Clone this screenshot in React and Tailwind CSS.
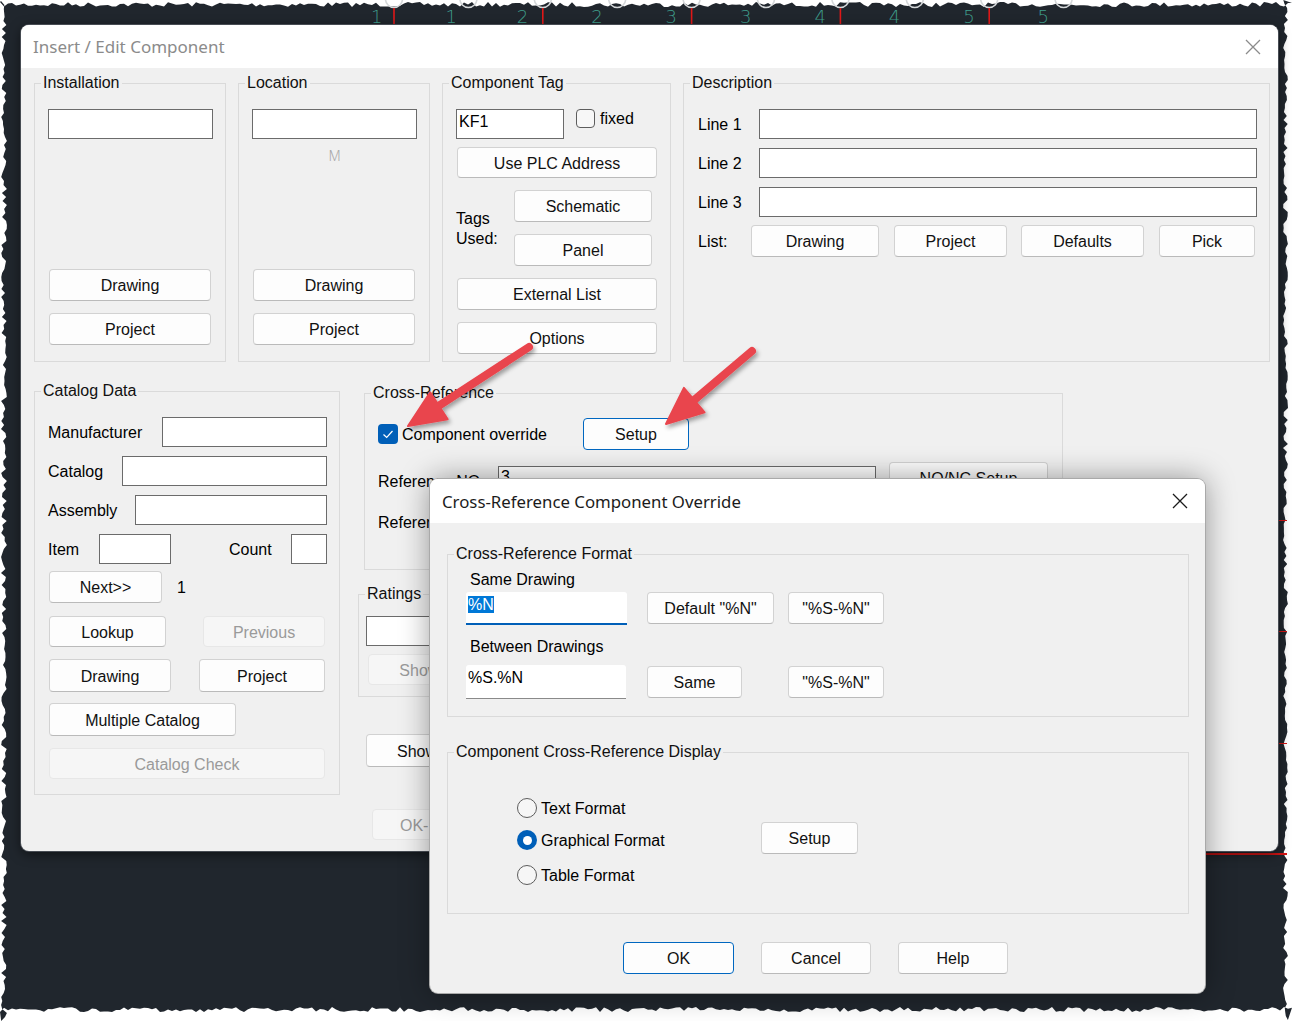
import React from "react";

const FB = "font-['Liberation_Sans',Arial,sans-serif]";
const FT = "font-['Noto_Sans','Open_Sans',sans-serif]";

function makeTorn() {
  let s = 7;
  const r = () => {
    s = (s * 16807) % 2147483647;
    return s / 2147483647;
  };
  const W = 1292;
  const H = 1021;
  const pts = [];
  for (let x = 0; x <= W; x += 4) pts.push(`${x}px ${(2 + r() * 5).toFixed(1)}px`);
  for (let y = 0; y <= H; y += 4) pts.push(`${(W - 4 - r() * 5).toFixed(1)}px ${y}px`);
  for (let x = W; x >= 0; x -= 4) pts.push(`${x}px ${(H - 9 - r() * 5).toFixed(1)}px`);
  for (let y = H; y >= 0; y -= 4) pts.push(`${(1 + r() * 6).toFixed(1)}px ${y}px`);
  return `polygon(${pts.join(",")})`;
}

function Btn({ children, className = "", disabled = false, focused = false }) {
  const tone = disabled
    ? "border-[#e7e7e7] bg-[#f6f6f6] text-[#9a9a9a]"
    : focused
    ? "border-[#0067c0] bg-[#fdfdfd] text-[#111111]"
    : "border-[#d2d2d2] border-b-[#bababa] bg-[#fdfdfd] text-[#111111]";
  return (
    <div
      className={`flex shrink-0 items-center justify-center overflow-hidden whitespace-nowrap rounded-[4px] border pt-[2px] text-[16px] leading-[18px] ${tone} ${className}`}
    >
      {children}
    </div>
  );
}

function Field({ className = "", children }) {
  return (
    <div
      className={`shrink-0 overflow-hidden whitespace-nowrap border border-[#6b6b6b] bg-white text-[16px] leading-[18px] text-black ${className}`}
    >
      {children}
    </div>
  );
}

function Group({ label, className = "", inner = "", children }) {
  return (
    <fieldset className={`m-0 min-w-0 shrink-0 border border-[#dadada] p-0 ${className}`}>
      <legend className="ml-[6px] px-[2px] text-[16px] leading-[18px] text-[#111111]">{label}</legend>
      <div className={inner}>{children}</div>
    </fieldset>
  );
}

function XIcon({ color }) {
  return (
    <svg width="16" height="16" viewBox="0 0 16 16">
      <path d="M1 1 L15 15 M15 1 L1 15" stroke={color} strokeWidth="1.3" fill="none" />
    </svg>
  );
}

function CheckOn() {
  return (
    <div className="flex h-[20px] w-[20px] shrink-0 items-center justify-center rounded-[4px] bg-[#005fb8]">
      <svg width="20" height="20" viewBox="0 0 20 20">
        <path d="M5.5 10.5 L8.7 13.5 L14.5 7" stroke="#ffffff" strokeWidth="1.2" fill="none" />
      </svg>
    </div>
  );
}

function Radio({ checked }) {
  if (checked)
    return (
      <div className="flex h-[20px] w-[20px] shrink-0 items-center justify-center rounded-full bg-[#005fb8]">
        <div className="h-[9px] w-[9px] rounded-full bg-white" />
      </div>
    );
  return <div className="h-[20px] w-[20px] shrink-0 rounded-full border border-[#5c5c5c] bg-[#f6f6f6]" />;
}

function Ruler() {
  const nums = [1, 1, 2, 2, 3, 3, 4, 4, 5, 5];
  return (
    <svg className="absolute left-0 top-0" width="1292" height="26">
      {nums.map((n, i) => {
        const c = 394 + 74.4 * i;
        return (
          <g key={i}>
            <circle cx={c} cy={-1} r={8.5} fill="none" stroke="#d5d8da" strokeWidth="1.6" />
            {i % 2 === 0 && <line x1={c} y1={8} x2={c} y2={26} stroke="#e01818" strokeWidth="1.6" />}
            <text x={c - (n === 1 ? 23 : 26)} y={23} fontSize="18" fill="#3f9e8c" fontFamily="DejaVu Sans, sans-serif" fontWeight="300">
              {n}
            </text>
          </g>
        );
      })}
    </svg>
  );
}

function Arrow({ tail, tip }) {
  const dx = tip[0] - tail[0];
  const dy = tip[1] - tail[1];
  const L = Math.hypot(dx, dy);
  const ux = dx / L;
  const uy = dy / L;
  const nx = -uy;
  const ny = ux;
  const hl = 37;
  const hw = 16;
  const bx = tip[0] - ux * hl;
  const by = tip[1] - uy * hl;
  const p = [
    [tip[0], tip[1]],
    [bx + nx * hw, by + ny * hw],
    [bx - nx * hw, by - ny * hw],
  ]
    .map((q) => q.map((v) => v.toFixed(1)).join(","))
    .join(" ");
  return (
    <g filter="url(#ash)">
      <line x1={tail[0]} y1={tail[1]} x2={bx + ux * 4} y2={by + uy * 4} stroke="#e9454d" strokeWidth="8" strokeLinecap="round" />
      <polygon points={p} fill="#e9454d" stroke="#e9454d" strokeWidth="2" strokeLinejoin="round" />
    </g>
  );
}

function Arrows() {
  return (
    <svg className="pointer-events-none absolute left-0 top-0" width="1292" height="1021">
      <defs>
        <filter id="ash" x="-20%" y="-20%" width="140%" height="140%">
          <feDropShadow dx="2" dy="3" stdDeviation="2" floodColor="#000000" floodOpacity="0.35" />
        </filter>
      </defs>
      <Arrow tail={[529, 347]} tip={[408, 426]} />
      <Arrow tail={[752, 351]} tip={[666, 424]} />
    </svg>
  );
}

function MainDialog() {
  return (
    <div className="absolute left-[21px] top-[25px] flex h-[826px] w-[1257px] flex-col overflow-hidden rounded-[8px] bg-[#f0f0f0] text-black shadow-[0_3px_12px_rgba(0,0,0,0.55)] ring-1 ring-[#474c53]">
      <div className="flex h-[43px] shrink-0 items-center justify-between bg-white pl-[12px] pr-[17px]">
        <span className={`${FT} text-[17px] text-[#8b8b8b]`}>Insert / Edit Component</span>
        <XIcon color="#8b8b8b" />
      </div>
      <div className="flex flex-col pl-[13px] pt-[6px] text-[16px] leading-[18px]">
        <div className="flex gap-[12px]">
          <Group label="Installation" className="w-[192px]" inner="flex h-[269px] flex-col justify-between pl-[13px] pt-[17px] pb-[16px]">
            <Field className="h-[30px] w-[165px]" />
            <div className="ml-[1px] flex flex-col gap-[12px]">
              <Btn className="h-[32px] w-[162px]">Drawing</Btn>
              <Btn className="h-[32px] w-[162px]">Project</Btn>
            </div>
          </Group>
          <Group label="Location" className="w-[192px]" inner="flex h-[269px] flex-col justify-between pl-[13px] pt-[17px] pb-[16px]">
            <div className="flex flex-col">
              <Field className="h-[30px] w-[165px]" />
              <div className={`${FT} mt-[9px] w-[165px] text-center text-[14px] font-light leading-[16px] text-[#a8a8a8]`}>M</div>
            </div>
            <div className="ml-[1px] flex flex-col gap-[12px]">
              <Btn className="h-[32px] w-[162px]">Drawing</Btn>
              <Btn className="h-[32px] w-[162px]">Project</Btn>
            </div>
          </Group>
          <Group label="Component Tag" className="w-[229px]" inner="flex h-[269px] flex-col pl-[13px] pt-[17px]">
            <div className="flex items-start">
              <Field className="h-[30px] w-[108px] pl-[2px] pt-[3px]">KF1</Field>
              <div className="ml-[12px] -mt-[1px] flex items-center">
                <div className="h-[19px] w-[19px] rounded-[4px] border border-[#5d5d5d] bg-[#f7f7f7]" />
                <span className="ml-[5px] pt-[2px]">fixed</span>
              </div>
            </div>
            <Btn className="ml-[1px] mt-[8px] h-[31px] w-[200px]">Use PLC Address</Btn>
            <div className="mt-[12px] flex items-center">
              <div className="w-[58px] pt-[2px] leading-[20px]">
                Tags
                <br />
                Used:
              </div>
              <div className="flex flex-col gap-[12px]">
                <Btn className="h-[32px] w-[138px]">Schematic</Btn>
                <Btn className="h-[32px] w-[138px]">Panel</Btn>
              </div>
            </div>
            <Btn className="ml-[1px] mt-[12px] h-[32px] w-[200px]">External List</Btn>
            <Btn className="ml-[1px] mt-[12px] h-[32px] w-[200px]">Options</Btn>
          </Group>
          <Group label="Description" className="w-[587px]" inner="flex h-[269px] flex-col gap-[9px] pl-[14px] pt-[17px]">
            {["Line 1", "Line 2", "Line 3"].map((l) => (
              <div key={l} className="flex items-center">
                <span className="w-[61px] pt-[2px]">{l}</span>
                <Field className="h-[30px] w-[498px]" />
              </div>
            ))}
            <div className="-mt-[1px] flex items-center">
              <span className="w-[53px] pt-[2px]">List:</span>
              <Btn className="h-[32px] w-[128px]">Drawing</Btn>
              <Btn className="ml-[15px] h-[32px] w-[113px]">Project</Btn>
              <Btn className="ml-[14px] h-[32px] w-[123px]">Defaults</Btn>
              <Btn className="ml-[15px] h-[32px] w-[96px]">Pick</Btn>
            </div>
          </Group>
        </div>

        <div className="mt-[20px] flex items-start">
          <Group label="Catalog Data" className="w-[306px]" inner="flex h-[394px] flex-col pl-[13px] pr-[12px] pt-[17px]">
            <div className="flex items-center justify-between">
              <span className="pt-[2px]">Manufacturer</span>
              <Field className="h-[30px] w-[165px]" />
            </div>
            <div className="mt-[9px] flex items-center justify-between">
              <span className="pt-[2px]">Catalog</span>
              <Field className="h-[30px] w-[205px]" />
            </div>
            <div className="mt-[9px] flex items-center justify-between">
              <span className="pt-[2px]">Assembly</span>
              <Field className="h-[30px] w-[192px]" />
            </div>
            <div className="mt-[9px] flex items-center">
              <span className="w-[51px] pt-[2px]">Item</span>
              <Field className="h-[30px] w-[72px]" />
              <span className="ml-[58px] w-[62px] pt-[2px]">Count</span>
              <Field className="h-[30px] w-[36px]" />
            </div>
            <div className="mt-[7px] flex items-center">
              <Btn className="ml-[1px] h-[32px] w-[113px]">Next&gt;&gt;</Btn>
              <span className="ml-[15px] pt-[2px]">1</span>
            </div>
            <div className="mt-[13px] flex items-center">
              <Btn className="ml-[1px] h-[31px] w-[117px]">Lookup</Btn>
              <Btn disabled className="ml-[37px] h-[31px] w-[122px]">
                Previous
              </Btn>
            </div>
            <div className="mt-[12px] flex items-center">
              <Btn className="ml-[1px] h-[33px] w-[122px]">Drawing</Btn>
              <Btn className="ml-[28px] h-[33px] w-[126px]">Project</Btn>
            </div>
            <Btn className="ml-[1px] mt-[11px] h-[33px] w-[187px]">Multiple Catalog</Btn>
            <Btn disabled className="ml-[1px] mt-[12px] h-[31px] w-[276px]">
              Catalog Check
            </Btn>
          </Group>

          <div className="ml-[18px] mt-[2px] flex flex-col items-start">
            <Group label="Cross-Reference" className="ml-[6px] w-[699px]" inner="h-[167px] pl-[13px] pt-[16px]">
              <div className="flex items-center">
                <div className="flex w-[205px] items-center">
                  <CheckOn />
                  <span className="ml-[4px] pt-[2px]">Component override</span>
                </div>
                <Btn focused className="h-[32px] w-[106px]">
                  Setup
                </Btn>
              </div>
              <div className="mt-[12px] flex items-start">
                <span className="mt-[11px] w-[120px]">Reference NO</span>
                <Field className="mt-[4px] h-[30px] w-[378px] pl-[2px] pt-[1px]">3</Field>
                <Btn className="ml-[13px] h-[32px] w-[159px]">NO/NC Setup</Btn>
              </div>
              <div className="mt-[18px]">Reference Type</div>
            </Group>
            <Group label="Ratings" className="mt-[15px] w-[300px]" inner="flex h-[93px] flex-col items-start pl-[7px] pt-[13px]">
              <Field className="h-[30px] w-[250px]" />
              <Btn disabled className="ml-[2px] mt-[8px] h-[31px] w-[124px]">
                Show All
              </Btn>
            </Group>
            <Btn className="ml-[8px] mt-[37px] h-[33px] w-[102px]">Show</Btn>
            <Btn disabled className="ml-[14px] mt-[42px] h-[31px] w-[136px]">
              OK-Repeat
            </Btn>
          </div>
        </div>
      </div>
    </div>
  );
}

function RadioRow({ checked = false, label, className = "" }) {
  return (
    <div className={`flex h-[20px] items-center ${className}`}>
      <Radio checked={checked} />
      <span className="ml-[4px] pt-[2px]">{label}</span>
    </div>
  );
}

function OverrideDialog() {
  return (
    <div className="absolute left-[430px] top-[479px] flex h-[514px] w-[775px] flex-col overflow-hidden rounded-[8px] bg-[#f0f0f0] text-black shadow-[0_0_30px_rgba(0,0,0,0.4)] ring-1 ring-[#a9a9a9]">
      <div className="flex h-[44px] shrink-0 items-center justify-between bg-white pl-[12px] pr-[17px]">
        <span className={`${FT} pt-[2px] text-[16.8px] text-[#1b1b1b]`}>Cross-Reference Component Override</span>
        <XIcon color="#1b1b1b" />
      </div>
      <div className="flex flex-col pl-[17px] pt-[22px] text-[16px] leading-[18px]">
        <Group label="Cross-Reference Format" className="w-[742px]" inner="h-[153px] pl-[18px] pt-[7px]">
          <div className="ml-[4px] leading-[20px]">Same Drawing</div>
          <div className="mt-[2px] flex items-start">
            <div className="h-[33px] w-[161px] shrink-0 rounded-t-[3px] border-b-2 border-b-[#005fb8] bg-white pl-[2px] pt-[3px] leading-[19px]">
              <span className="bg-[#0078d7] text-white">%N</span>
            </div>
            <Btn className="ml-[20px] h-[32px] w-[127px]">Default "%N"</Btn>
            <Btn className="ml-[14px] h-[32px] w-[96px]">"%S-%N"</Btn>
          </div>
          <div className="ml-[4px] mt-[12px] leading-[20px]">Between Drawings</div>
          <div className="mt-[8px] flex items-start">
            <div className="h-[34px] w-[160px] shrink-0 rounded-t-[3px] border-b border-b-[#8a8a8a] bg-white pl-[2px] pt-[4px]">%S.%N</div>
            <Btn className="ml-[21px] mt-[1px] h-[32px] w-[95px]">Same</Btn>
            <Btn className="ml-[46px] mt-[1px] h-[32px] w-[96px]">"%S-%N"</Btn>
          </div>
        </Group>

        <Group label="Component Cross-Reference Display" className="mt-[26px] w-[742px]" inner="flex h-[152px] items-start">
          <div className="flex w-[313px] shrink-0 flex-col pl-[69px] pt-[37px]">
            <RadioRow label="Text Format" />
            <RadioRow checked label="Graphical Format" className="mt-[12px]" />
            <RadioRow label="Table Format" className="mt-[15px]" />
          </div>
          <Btn className="mt-[61px] h-[32px] w-[97px]">Setup</Btn>
        </Group>

        <div className="mt-[28px] flex">
          <Btn focused className="ml-[176px] h-[32px] w-[111px]">
            OK
          </Btn>
          <Btn className="ml-[27px] h-[32px] w-[110px]">Cancel</Btn>
          <Btn className="ml-[27px] h-[32px] w-[110px]">Help</Btn>
        </div>
      </div>
    </div>
  );
}

export default function App() {
  const torn = makeTorn();
  return (
    <div className={`relative h-[1021px] w-[1292px] overflow-hidden bg-white ${FB}`}>
      <div className="absolute inset-0 bg-[#20262d]" style={{ clipPath: torn }} />
      <Ruler />
      <div className="absolute left-[1279px] top-[520px] h-[1px] w-[8px] bg-[#d41414]" />
      <div className="absolute left-[1279px] top-[631px] h-[1px] w-[8px] bg-[#d41414]" />
      <div className="absolute left-[1279px] top-[743px] h-[1px] w-[8px] bg-[#d41414]" />
      <div className="absolute left-[1205px] top-[853px] h-[2px] w-[82px] bg-[#d41414]" />
      <MainDialog />
      <OverrideDialog />
      <Arrows />
    </div>
  );
}
